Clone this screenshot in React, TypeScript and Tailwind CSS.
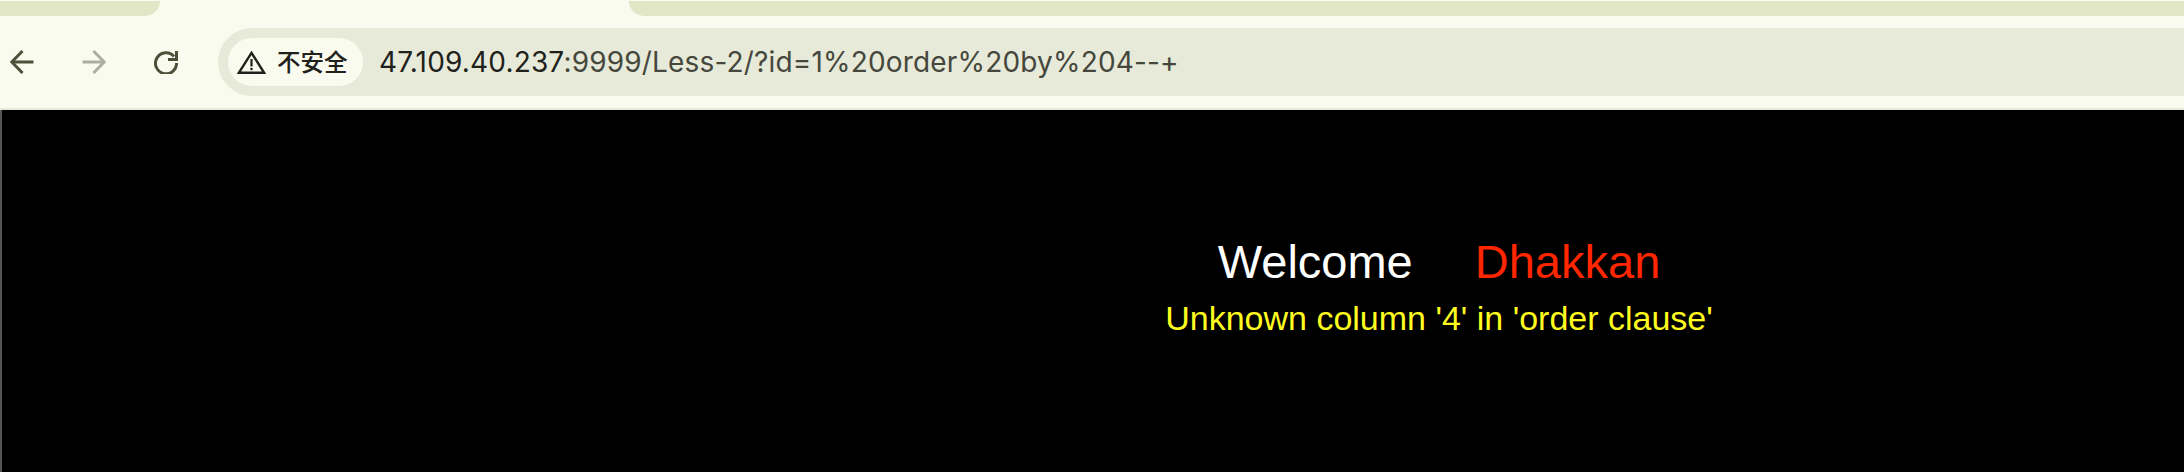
import React from "react";

const BackIcon = ({ className }: { className?: string }) => (
  <svg viewBox="0 0 24 24" className={className} fill="none" stroke="currentColor" strokeWidth="3">
    <path d="M23.5 12H2.5" />
    <path d="M12.5 1L1.8 12l10.7 11" />
  </svg>
);

const ForwardIcon = ({ className }: { className?: string }) => (
  <svg viewBox="0 0 24 24" className={className} fill="none" stroke="currentColor" strokeWidth="3">
    <path d="M0.5 12h21" />
    <path d="M11.5 1l10.7 11-10.7 11" />
  </svg>
);

const ReloadIcon = ({ className }: { className?: string }) => (
  <svg viewBox="0 0 24 24" className={className} fill="none" stroke="currentColor" strokeWidth="3">
    <path d="M20 6.5A10.5 10.5 0 1 0 22.5 13" />
    <path d="M22.5 1v8.5H14" />
  </svg>
);

const WarningIcon = ({ className }: { className?: string }) => (
  <svg viewBox="0 0 29 23" className={className} fill="none">
    <path d="M14.5 1.8L1.8 21.8h25.4z" stroke="currentColor" strokeWidth="2.4" />
    <path d="M14.5 8v7.5" stroke="currentColor" strokeWidth="2.2" />
    <circle cx="14.5" cy="18" r="1.3" fill="currentColor" />
  </svg>
);

export default function App() {
  return (
    <div className="w-[2184px] h-[472px] overflow-hidden flex flex-col bg-black font-['Liberation_Sans',Arial,sans-serif]">
      {/* tab strip */}
      <div className="h-4 shrink-0 flex bg-[#fafbef]">
        <div className="w-[160px] h-[15px] mt-px bg-[#e0e6c6] rounded-br-[20px]" />
        <div className="w-[469px]" />
        <div className="flex-1 h-[15px] mt-px bg-[#e0e6c6] rounded-bl-[16px]" />
      </div>

      {/* toolbar */}
      <div className="h-[94px] shrink-0 flex items-center bg-[#fafbef] border-b-2 border-[#e6e9d7]">
        <div className="flex items-center pl-[10px] text-[#4b5138]">
          <BackIcon className="w-6 h-6" />
          <ForwardIcon className="w-6 h-6 ml-[48px] text-[#acaea0]" />
          <ReloadIcon className="w-6 h-6 ml-[48px]" />
        </div>
        <div className="ml-[40px] flex-1 h-[68px] flex items-center bg-[#e7ead8] rounded-l-[34px] pl-[10px]">
          <div className="h-[48px] w-[135px] flex items-center bg-[#fafbef] rounded-full pl-[9px] text-[#20211b]">
            <WarningIcon className="w-[29px] h-[23px]" />
            <span className="ml-[11px] text-[23.5px] leading-none font-medium font-['Noto_Sans_CJK_SC',sans-serif]">不安全</span>
          </div>
          <div className="ml-[16px] text-[28px] tracking-[0.17px] leading-none whitespace-nowrap text-[#45473d] font-['Inter',sans-serif]">
            <span className="text-[#20211b]">47.109.40.237</span>:9999/Less-2/?id=1%20order%20by%204--+
          </div>
        </div>
      </div>

      {/* page body */}
      <main className="flex-1 pl-[692px] pt-[122px] text-center border-l-2 border-[#555555]">
        <div className="text-[47px] leading-[60px] whitespace-nowrap text-white">
          Welcome<span className="ml-[62px] text-[#ff2600]">Dhakkan</span>
        </div>
        <div className="mt-[6px] text-[34px] leading-[40px] whitespace-nowrap text-[#fffb1f]">
          Unknown column '4' in 'order clause'
        </div>
      </main>
    </div>
  );
}
